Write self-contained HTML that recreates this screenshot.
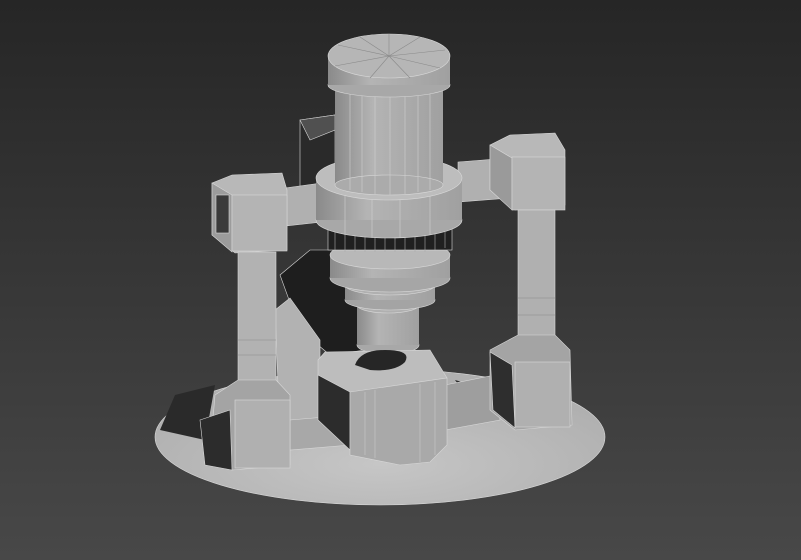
<!DOCTYPE html><html><head><style>html,body{margin:0;padding:0;width:801px;height:560px;overflow:hidden}</style></head><body>
<svg width="801" height="560" viewBox="0 0 801 560" xmlns="http://www.w3.org/2000/svg">
<defs>
<linearGradient id="bg" x1="0" y1="0" x2="0" y2="1"><stop offset="0" stop-color="#262626"/><stop offset="1" stop-color="#484848"/></linearGradient>
<linearGradient id="cyl" x1="0" y1="0" x2="1" y2="0"><stop offset="0" stop-color="#8a8a8a"/><stop offset="0.35" stop-color="#b4b4b4"/><stop offset="1" stop-color="#a0a0a0"/></linearGradient>
<radialGradient id="disc" cx="0.5" cy="0.7" r="0.6"><stop offset="0" stop-color="#c6c6c6"/><stop offset="1" stop-color="#b0b0b0"/></radialGradient>
</defs>
<rect width="801" height="560" fill="url(#bg)"/>
<g stroke="#d8d8d8" stroke-width="0.6">
<ellipse cx="380" cy="437" rx="225" ry="68" fill="url(#disc)"/>
<path d="M160 430 L175 395 L215 385 L205 440 Z M300 380 L330 385 L320 420 Z M455 380 L490 390 L480 415 Z" fill="#2a2a2a" stroke="none"/>
<path d="M300 120 L335 115 L335 190 L300 195 Z" fill="#2a2a2a"/>
<path d="M300 120 L335 115 L335 130 L310 140 Z" fill="#505050"/>
<path d="M280 275 L310 250 L345 250 L360 300 L365 350 L330 355 L300 330 Z" fill="#1e1e1e"/>
<path d="M275 310 L290 298 L320 340 L320 430 L280 435 Z" fill="#b2b2b2"/>
<path d="M290 420 L350 415 L350 445 L290 450 Z" fill="#a8a8a8"/>
<path d="M445 385 L495 375 L500 420 L445 430 Z" fill="#9e9e9e"/>
<!-- lowest cyl -->
<ellipse cx="388" cy="345" rx="31" ry="9" fill="#a8a8a8"/>
<rect x="357" y="305" width="62" height="40" fill="url(#cyl)" stroke="none"/>
<ellipse cx="388" cy="305" rx="31" ry="8" fill="#b0b0b0"/>
<!-- mid -->
<ellipse cx="390" cy="300" rx="45" ry="10" fill="#a4a4a4"/>
<rect x="345" y="285" width="90" height="15" fill="url(#cyl)" stroke="none"/>
<ellipse cx="390" cy="285" rx="45" ry="10" fill="#b0b0b0"/>
<!-- lower ring -->
<ellipse cx="390" cy="278" rx="60" ry="14" fill="#a6a6a6"/>
<rect x="330" y="255" width="120" height="23" fill="url(#cyl)" stroke="none"/>
<ellipse cx="390" cy="255" rx="60" ry="14" fill="#b8b8b8"/>
<!-- gap -->
<rect x="328" y="228" width="124" height="22" fill="#202020"/>
<path d="M335 232 V250 M345 232 V252 M355 232 V252 M365 232 V252 M375 232 V252 M385 232 V252 M395 232 V252 M405 232 V252 M415 232 V252 M425 232 V252 M435 232 V250 M445 232 V248" stroke="#aaa"/>
<path d="M285 188 L322 183 L322 222 L285 226 Z" fill="#b0b0b0"/>
<path d="M458 162 L510 158 L510 198 L458 202 Z" fill="#b0b0b0"/>
<!-- big ring -->
<ellipse cx="389" cy="220" rx="73" ry="18" fill="#a8a8a8"/>
<rect x="316" y="178" width="146" height="42" fill="url(#cyl)" stroke="none"/>
<path d="M345 190 V235 M372 195 V238 M400 195 V238 M430 192 V235" stroke="#cfcfcf"/>
<ellipse cx="389" cy="178" rx="73" ry="22" fill="#bdbdbd"/>
<!-- main cylinder -->
<rect x="335" y="75" width="108" height="110" fill="url(#cyl)" stroke="none"/>
<ellipse cx="389" cy="185" rx="54" ry="10" fill="#ababab"/>
<path d="M350 88 V190 M362 90 V192 M375 90 V194 M390 90 V195 M405 90 V194 M418 90 V192 M430 88 V190" stroke="#cfcfcf"/>
<!-- cap -->
<ellipse cx="389" cy="85" rx="61" ry="12" fill="#a8a8a8"/>
<rect x="328" y="55" width="122" height="30" fill="url(#cyl)" stroke="none"/>
<ellipse cx="389" cy="56" rx="61" ry="22" fill="#b6b6b6"/>
<path d="M389 56 L389 34 M389 56 L420 37 M389 56 L445 50 M389 56 L440 68 M389 56 L410 78 M389 56 L370 78 M389 56 L335 66 M389 56 L338 45 M389 56 L360 37" stroke="#8a8a8a"/>
<!-- left pillar -->
<path d="M212 183 L232 175 L282 173 L287 190 L287 250 L235 253 L212 235 Z" fill="#b8b8b8"/>
<path d="M212 183 L232 195 L232 252 L212 235 Z" fill="#9c9c9c"/>
<rect x="216" y="195" width="13" height="38" fill="#3a3a3a"/>
<rect x="232" y="195" width="55" height="56" fill="#b4b4b4"/>
<rect x="238" y="252" width="38" height="140" fill="#b2b2b2"/>
<path d="M238 340 H276 M238 355 H276" stroke="#888"/>
<path d="M215 395 L238 380 L276 380 L290 395 L290 465 L232 470 L210 455 Z" fill="#a4a4a4"/>
<path d="M200 420 L230 410 L232 470 L205 465 Z" fill="#2c2c2c"/>
<rect x="235" y="400" width="55" height="68" fill="#b0b0b0"/>
<!-- right pillar -->
<path d="M490 145 L510 135 L555 133 L565 150 L565 205 L515 210 L490 190 Z" fill="#b8b8b8"/>
<path d="M490 145 L512 158 L512 210 L490 190 Z" fill="#9a9a9a"/>
<rect x="512" y="157" width="53" height="53" fill="#b4b4b4"/>
<rect x="518" y="210" width="37" height="140" fill="#b0b0b0"/>
<path d="M518 298 H555 M518 315 H555" stroke="#888"/>
<path d="M490 350 L518 335 L555 335 L570 350 L572 425 L515 430 L490 410 Z" fill="#a4a4a4"/>
<path d="M490 352 L512 365 L515 428 L493 410 Z" fill="#2e2e2e"/>
<rect x="515" y="362" width="55" height="65" fill="#b0b0b0"/>
<!-- center block -->
<path d="M318 360 L325 352 L430 350 L447 378 L350 393 L318 375 Z" fill="#bdbdbd"/>
<path d="M355 365 Q360 350 385 350 Q412 350 405 362 Q395 372 370 370 Z" fill="#262626" stroke="none"/>
<path d="M318 375 L350 392 L350 450 L318 420 Z" fill="#2c2c2c"/>
<path d="M350 392 L447 378 L447 445 L430 462 L400 465 L350 455 Z" fill="#a9a9a9"/>
<path d="M365 392 V455 M375 390 V458 M420 384 V462 M435 382 V455" stroke="#cacaca"/>
</g>
</svg>
</body></html>
